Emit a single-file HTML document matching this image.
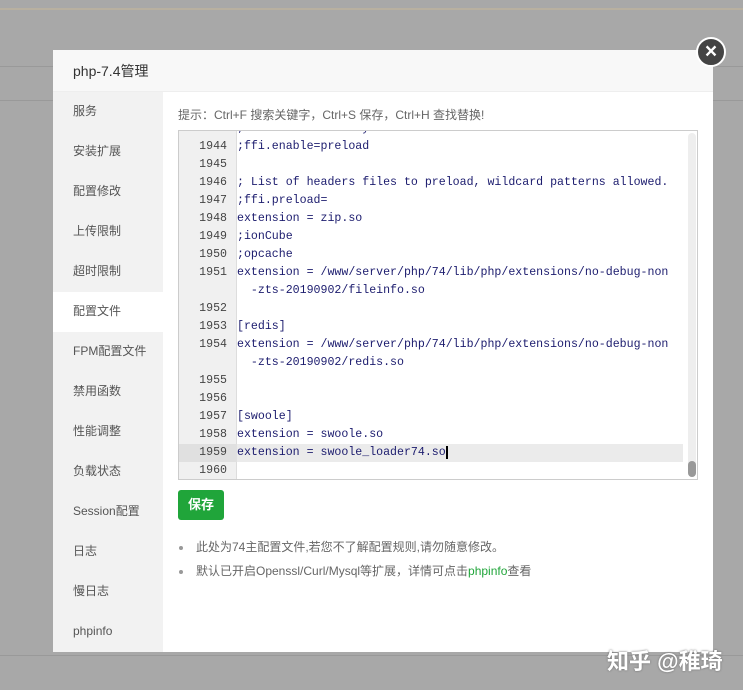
<!DOCTYPE html>
<html><head><meta charset="utf-8"><style>
*{margin:0;padding:0;box-sizing:border-box}
body{width:743px;height:690px;overflow:hidden;background:#a8a8a8;font-family:"Liberation Sans","Noto Sans CJK SC",sans-serif;position:relative}
.bgl{position:absolute;left:0;right:0;height:1px;background:#999}
.modal{position:absolute;left:53px;top:50px;width:660px;height:602px;background:#fff}
.title{height:42px;line-height:43px;padding-left:20px;font-size:14px;color:#333;background:#f8f8f8;border-bottom:1px solid #eee}
.side{position:absolute;left:0;top:42px;width:110px;bottom:0;background:#f2f2f2}
.side div{height:40px;line-height:38px;padding-left:20px;font-size:12px;color:#555}
.side .act{background:#fff}
.tip{position:absolute;left:125px;top:56px;font-size:12px;color:#666}
.ed{position:absolute;left:125px;top:80px;width:520px;height:350px;border:1px solid #ccc;background:#fff;overflow:hidden;font-family:"Liberation Mono",monospace;font-size:11.6px;color:#1c1c6e}
.gut{position:absolute;left:0;top:0;bottom:0;width:58px;background:#f0f0f0;border-right:1px solid #ddd}
.lines{position:absolute;left:0;top:-11px;width:504px}
.l{height:18px;line-height:18px;position:relative;white-space:pre}
.n{position:absolute;left:0;width:48px;text-align:right;color:#444}
.t{position:absolute;left:58px}
.hl{background:#ebebeb}
.hl .n{background:#e0e0e0;width:58px;padding-right:10px}
.sb{position:absolute;right:1px;top:2px;width:8px;height:344px;background:#eee;border-radius:4px}
.sb i{position:absolute;bottom:0;left:0;width:8px;height:16px;background:#999;border-radius:4px}
.btn{position:absolute;left:125px;top:440px;width:46px;height:30px;background:#20a53a;color:#fff;font-size:13px;font-weight:bold;line-height:30px;text-align:center;border-radius:3px}
ul{position:absolute;left:125px;top:489px;list-style:none;font-size:12px;color:#666}
li{height:24px;line-height:16px;padding-left:18px;position:relative}
li:before{content:"";position:absolute;left:1px;top:7px;width:4px;height:4px;border-radius:2px;background:#999}
.close{position:absolute;left:696px;top:37px;width:30px;height:30px;border-radius:50%;background:#444;border:2px solid #fff;color:#fff;text-align:center;line-height:25px;font-size:21px;font-weight:bold}
.wm{position:absolute;left:607px;top:644px;font-size:22px;color:#fff;font-weight:bold;text-shadow:0 0 2px #666}
</style></head><body>
<div class="bgl" style="top:8px;background:#b8b0a0;height:2px"></div>
<div class="bgl" style="top:66px"></div><div class="bgl" style="top:100px"></div>
<div class="bgl" style="top:655px"></div>
<div class="modal">
<div class="title">php-7.4管理</div>
<div class="side">
<div>服务</div><div>安装扩展</div><div>配置修改</div><div>上传限制</div><div>超时限制</div><div class="act">配置文件</div><div>FPM配置文件</div><div>禁用函数</div><div>性能调整</div><div>负载状态</div><div>Session配置</div><div>日志</div><div>慢日志</div><div>phpinfo</div>
</div>
<div class="tip">提示：Ctrl+F 搜索关键字，Ctrl+S 保存，Ctrl+H 查找替换!</div>
<div class="ed"><div class="gut"></div>
<div class="lines">
<div class="l"><span class="n">1943</span><span class="t">; true        always enabled</span></div>
<div class="l"><span class="n">1944</span><span class="t">;ffi.enable=preload</span></div>
<div class="l"><span class="n">1945</span></div>
<div class="l"><span class="n">1946</span><span class="t">; List of headers files to preload, wildcard patterns allowed.</span></div>
<div class="l"><span class="n">1947</span><span class="t">;ffi.preload=</span></div>
<div class="l"><span class="n">1948</span><span class="t">extension = zip.so</span></div>
<div class="l"><span class="n">1949</span><span class="t">;ionCube</span></div>
<div class="l"><span class="n">1950</span><span class="t">;opcache</span></div>
<div class="l"><span class="n">1951</span><span class="t">extension = /www/server/php/74/lib/php/extensions/no-debug-non</span></div>
<div class="l"><span class="t">  -zts-20190902/fileinfo.so</span></div>
<div class="l"><span class="n">1952</span></div>
<div class="l"><span class="n">1953</span><span class="t">[redis]</span></div>
<div class="l"><span class="n">1954</span><span class="t">extension = /www/server/php/74/lib/php/extensions/no-debug-non</span></div>
<div class="l"><span class="t">  -zts-20190902/redis.so</span></div>
<div class="l"><span class="n">1955</span></div>
<div class="l"><span class="n">1956</span></div>
<div class="l"><span class="n">1957</span><span class="t">[swoole]</span></div>
<div class="l"><span class="n">1958</span><span class="t">extension = swoole.so</span></div>
<div class="l hl"><span class="n">1959</span><span class="t">extension = swoole_loader74.so<span style="border-left:2px solid #000"></span></span></div>
<div class="l"><span class="n">1960</span></div>
</div>
<div class="sb"><i></i></div>
</div>
<div class="btn">保存</div>
<ul><li>此处为74主配置文件,若您不了解配置规则,请勿随意修改。</li><li>默认已开启Openssl/Curl/Mysql等扩展，详情可点击<span style="color:#20a53a">phpinfo</span>查看</li></ul>
</div>
<div class="close">×</div>
<div class="wm">知乎 @稚琦</div>
</body></html>
